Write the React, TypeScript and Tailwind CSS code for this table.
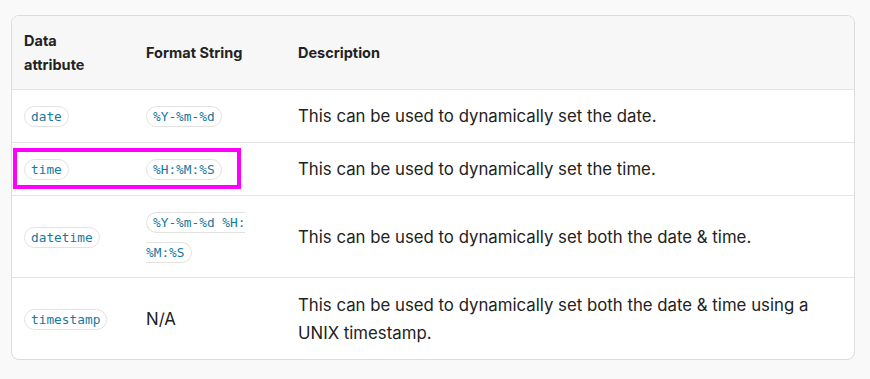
import React from 'react';

interface Row {
  attr: string;
  format: string | null;
  desc: string;
  tall?: boolean;
}

const rows: Row[] = [
  { attr: 'date', format: '%Y-%m-%d', desc: 'This can be used to dynamically set the date.' },
  { attr: 'time', format: '%H:%M:%S', desc: 'This can be used to dynamically set the time.' },
  // zero-width space lets the long format wrap after "%H:"
  { attr: 'datetime', format: '%Y-%m-%d %H:\u200B%M:%S', desc: 'This can be used to dynamically set both the date & time.', tall: true },
  {
    attr: 'timestamp',
    format: null,
    desc: 'This can be used to dynamically set both the date & time using a UNIX timestamp.',
    tall: true,
  },
];

const Code: React.FC<{ children: React.ReactNode }> = ({ children }) => (
  <code className="rounded-full border border-[#e2e2e2] bg-white px-[6px] py-[2px] font-['DejaVu_Sans_Mono',monospace] text-[12.8px] text-[#1779a0] [box-decoration-break:slice]">
    {children}
  </code>
);

export default function App() {
  return (
    <div className="min-h-[379px] bg-[#f9f9f9] px-[11px] pt-[15px] font-['Inter',sans-serif] text-[#222]">
      <div className="relative w-[844px] overflow-hidden rounded-[8px] border border-[#dcdcdc] bg-white">
        <div className="grid h-[73px] grid-cols-[122px_152px_1fr] items-center bg-[#f7f7f7] text-[14.5px] font-bold leading-[24px] text-[#232323]">
          <div className="w-[90px] pl-3">Data attribute</div>
          <div className="pl-3">Format String</div>
          <div className="pl-3">Description</div>
        </div>
        {rows.map((r) => (
          <div
            key={r.attr}
            className={`grid grid-cols-[122px_152px_1fr] items-center border-t border-[#e4e4e4] ${r.tall ? 'h-[82px]' : 'h-[53px]'}`}
          >
            <div className="pl-3 leading-[28px]">
              <Code>{r.attr}</Code>
            </div>
            <div className="pl-3 leading-[28px]">
              {r.format ? (
                <div className="w-[106px]">
                  <Code>{r.format}</Code>
                </div>
              ) : (
                <span className="text-[16.8px]">N/A</span>
              )}
            </div>
            <div className="pl-3 pr-6 text-[16.8px] leading-[28px]">{r.desc}</div>
          </div>
        ))}
        <div className="pointer-events-none absolute left-[1px] top-[132px] h-[41px] w-[228px] border-[4px] border-[#ff00ff]" />
      </div>
    </div>
  );
}
